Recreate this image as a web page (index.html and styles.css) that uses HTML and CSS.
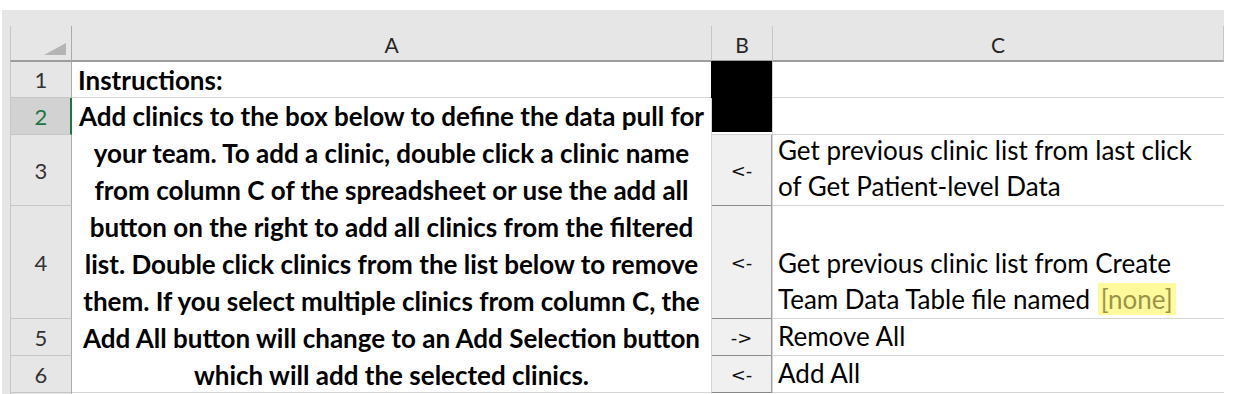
FILE: index.html
```html
<!DOCTYPE html>
<html lang="en">
<head>
  <meta charset="UTF-8" />
  <title>Team clinic list</title>
  <link rel="stylesheet" href="styles.css">
</head>
<body>
  <!-- Worksheet -->
  <div class="sheet">
    <!-- Column headers -->
    <div class="corner">
      <svg width="22" height="12" viewBox="0 0 22 12"><polygon points="0,12 22,12 22,0" fill="#b4b4b4"/></svg>
    </div>
    <div class="colhead">A</div>
    <div class="colhead">B</div>
    <div class="colhead">C</div>

    <!-- Row 1 -->
    <div class="rowhead">1</div>
    <div class="cell title">Instructions:</div>
    <div class="cell marker"><div class="marker-fill"></div></div>
    <div class="cell note"></div>

    <!-- Row 2 -->
    <div class="rowhead active">2</div>
    <div class="cell help">
      Add clinics to the box below to define the data pull for<br>
      your team. To add a clinic, double click a clinic name<br>
      from column C of the spreadsheet or use the add all<br>
      button on the right to add all clinics from the filtered<br>
      list. Double click clinics from the list below to remove<br>
      them. If you select multiple clinics from column C, the<br>
      Add All button will change to an Add Selection button<br>
      which will add the selected clinics.
    </div>
    <div class="cell note"></div>

    <!-- Row 3 -->
    <div class="rowhead">3</div>
    <div class="cell action"><div class="btn">&lt;-</div></div>
    <div class="cell note"><div>Get previous clinic list from last click<br>of Get Patient-level Data</div></div>

    <!-- Row 4 -->
    <div class="rowhead">4</div>
    <div class="cell action"><div class="btn">&lt;-</div></div>
    <div class="cell note"><div>Get previous clinic list from Create<br>Team Data Table file named <span class="flag">[none]</span></div></div>

    <!-- Row 5 -->
    <div class="rowhead">5</div>
    <div class="cell action"><div class="btn">-&gt;</div></div>
    <div class="cell note"><div>Remove All</div></div>

    <!-- Row 6 -->
    <div class="rowhead">6</div>
    <div class="cell action"><div class="btn">&lt;-</div></div>
    <div class="cell note"><div>Add All</div></div>

    <!-- Row 7 (only its top edge shows) -->
    <div class="rowhead"></div>
    <div class="cell"></div>
    <div class="cell"></div>
    <div class="cell note"></div>
  </div>
</body>
</html>
```

FILE: styles.css
```css
/* Page */
*, *::before, *::after {
  box-sizing: border-box;
}

html, body {
  margin: 0;
  height: 100%;
  overflow: hidden;
  background: #ffffff;
}

body {
  font-family: Lato, sans-serif;
  color: #000000;
  padding: 10px 0 0 2px;
}

/* Worksheet grid */
.sheet {
  width: 1222px;
  background: #e6e6e6;
  padding: 16px 0 0 8px;
  display: grid;
  grid-template-columns: 62px 640px 61px 451px;
  grid-template-rows: 36px 36px 37px 71px 113px 37px 37px 36px;
}

.corner,
.colhead {
  border-bottom: 2px solid #9d9d9d;
  border-right: 1px solid #c6c6c6;
}

.corner {
  border-left: 1px solid #c6c6c6;
  border-right-color: #ababab;
  display: flex;
  align-items: flex-end;
  justify-content: flex-end;
  padding: 0 5px 5px 0;
}

.corner svg {
  display: block;
}

.colhead {
  display: flex;
  align-items: center;
  justify-content: center;
  font-size: 21px;
  color: #262626;
  padding-top: 2px;
}

.colhead:last-of-type {
  border-right: none;
}

.rowhead {
  border-left: 1px solid #c6c6c6;
  border-right: 1px solid #ababab;
  border-bottom: 1px solid #c6c6c6;
  display: flex;
  align-items: center;
  justify-content: center;
  font-size: 22px;
  color: #333333;
}

.rowhead.active {
  background: #d2d2d2;
  color: #217346;
  border-right: 2px solid #217346;
  padding-left: 1px;
}

/* Cells */
.cell {
  background: #ffffff;
  border-right: 1px solid #d4d4d4;
  border-bottom: 1px solid #d4d4d4;
  font-size: 26px;
}

.cell.note {
  border-right: none;
  display: flex;
  align-items: flex-end;
  padding: 0 0 1px 5px;
  line-height: 36px;
  white-space: nowrap;
}

.title {
  font-weight: bold;
  display: flex;
  align-items: center;
  padding: 0 0 0 6px;
}

.marker {
  grid-row: span 2;
  border-bottom: 1px solid #d4d4d4;
  padding-bottom: 2px;
}

.marker-fill {
  background: #000000;
  height: 71px;
  margin: -1px 0 0 -1px;
}

.help {
  grid-row: span 5;
  grid-column: 2;
  font-weight: bold;
  text-align: center;
  line-height: 37px;
  white-space: nowrap;
}

.action {
  grid-column: 3;
  border-bottom: none;
}

.btn {
  height: 100%;
  background: #f0f0f0;
  border-right: 1px solid #a0a0a0;
  border-bottom: 1px solid #8a8a8a;
  display: flex;
  align-items: center;
  justify-content: center;
  font-family: "DejaVu Sans", sans-serif;
  font-size: 18px;
  color: #111111;
}

.flag {
  background: #fffa9c;
  color: #9a9448;
  padding: 0 3px;
  margin-left: 1px;
}
```
